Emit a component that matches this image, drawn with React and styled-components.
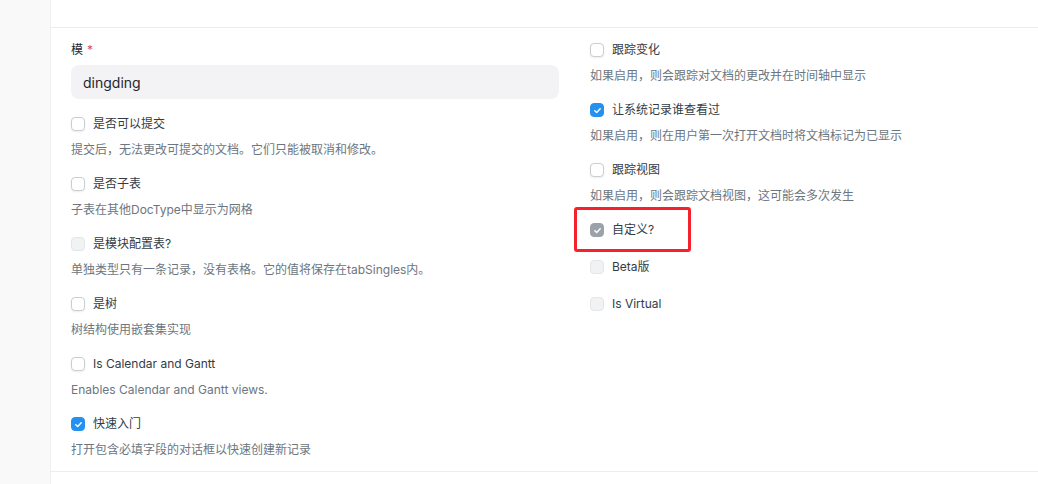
import React from 'react';
import styled, { createGlobalStyle, css } from 'styled-components';

const GlobalStyle = createGlobalStyle`
  html, body {
    margin: 0;
    padding: 0;
    background: #ffffff;
    overflow: hidden;
  }
  body {
    font-family: Inter, "Noto Sans CJK SC", "Noto Sans", sans-serif;
    color: #1f272e;
  }
`;

const Page = styled.div`
  display: flex;
  width: 1038px;
  height: 484px;
`;

const Sidebar = styled.aside`
  width: 50px;
  flex: none;
  background: #f9f9f9;
  border-right: 1px solid #f0f0f0;
`;

const Main = styled.main`
  flex: 1;
  min-width: 0;
  display: flex;
  flex-direction: column;
`;

const TopStrip = styled.div`
  height: 27px;
  border-bottom: 1px solid #ededed;
`;

const Section = styled.section`
  display: grid;
  grid-template-columns: 488px 488px;
  column-gap: 31px;
  padding: 12px 0 12px 20px;
  border-bottom: 1px solid #ededed;
`;

const Column = styled.div`
  display: flex;
  flex-direction: column;
`;

const FieldLabel = styled.label`
  font-size: 12px;
  line-height: 20px;
  color: #1f272e;
  margin-bottom: 5px;
`;

const Required = styled.span`
  color: #e24c4c;
  margin-left: 4px;
`;

const TextInput = styled.div`
  height: 34px;
  box-sizing: border-box;
  padding: 0 12px;
  display: flex;
  align-items: center;
  background: #f3f3f5;
  border-radius: 8px;
  font-size: 14px;
  color: #1f272e;
  margin-bottom: 15px;
`;

const Item = styled.div`
  position: relative;
  display: flex;
  flex-direction: column;
  margin-bottom: ${p => (p.$last ? 0 : p.$plain ? 17 : 15)}px;
`;

const Row = styled.div`
  display: flex;
  align-items: center;
  gap: 8px;
  height: 20px;
`;

const boxVariants = {
  off: css`
    background: #ffffff;
    border: 1px solid #c9ced3;
    box-shadow: 0 1px 2px rgba(0, 0, 0, 0.08);
  `,
  on: css`
    background: #2490ef;
    border: 1px solid #2490ef;
  `,
  disabledOff: css`
    background: #f1f2f3;
    border: 1px solid #e3e6e8;
  `,
  disabledOn: css`
    background: #9ca2a9;
    border: 1px solid #9ca2a9;
  `,
};

const Box = styled.span`
  width: 14px;
  height: 14px;
  box-sizing: border-box;
  border-radius: 4px;
  display: inline-flex;
  align-items: center;
  justify-content: center;
  flex: none;
  ${p => boxVariants[p.$variant]}
`;

const RowLabel = styled.span`
  font-size: 12px;
  line-height: 20px;
  color: #333c44;
`;

const Help = styled.p`
  margin: 7px 0 0;
  font-size: 12px;
  line-height: 18px;
  color: #6c7680;
`;

const Highlight = styled.div`
  position: absolute;
  left: -16px;
  top: -13px;
  width: 117px;
  height: 45px;
  box-sizing: border-box;
  border: 3px solid #f5222d;
  border-radius: 3px;
  pointer-events: none;
`;

const Check = () => (
  <svg width="9" height="9" viewBox="0 0 10 10" fill="none">
    <path d="M2 5.2 L4.1 7.2 L8 3" stroke="#fff" strokeWidth="1.6" strokeLinecap="round" strokeLinejoin="round" />
  </svg>
);

function CheckField({ label, help, variant = 'off', last, highlight }) {
  const checked = variant === 'on' || variant === 'disabledOn';
  return (
    <Item $last={last} $plain={!help}>
      <Row>
        <Box $variant={variant}>{checked && <Check />}</Box>
        <RowLabel>{label}</RowLabel>
      </Row>
      {help && <Help>{help}</Help>}
      {highlight && <Highlight />}
    </Item>
  );
}

const leftFields = [
  { label: '是否可以提交', help: '提交后，无法更改可提交的文档。它们只能被取消和修改。' },
  { label: '是否子表', help: '子表在其他DocType中显示为网格' },
  { label: '是模块配置表?', help: '单独类型只有一条记录，没有表格。它的值将保存在tabSingles内。', variant: 'disabledOff' },
  { label: '是树', help: '树结构使用嵌套集实现' },
  { label: 'Is Calendar and Gantt', help: 'Enables Calendar and Gantt views.' },
  { label: '快速入门', help: '打开包含必填字段的对话框以快速创建新记录', variant: 'on' },
];

const rightFields = [
  { label: '跟踪变化', help: '如果启用，则会跟踪对文档的更改并在时间轴中显示' },
  { label: '让系统记录谁查看过', help: '如果启用，则在用户第一次打开文档时将文档标记为已显示', variant: 'on' },
  { label: '跟踪视图', help: '如果启用，则会跟踪文档视图，这可能会多次发生' },
  { label: '自定义?', variant: 'disabledOn', highlight: true },
  { label: 'Beta版', variant: 'disabledOff' },
  { label: 'Is Virtual', variant: 'disabledOff' },
];

export default function App() {
  return (
    <Page>
      <GlobalStyle />
      <Sidebar />
      <Main>
        <TopStrip />
        <Section>
          <Column>
            <FieldLabel>
              模<Required>*</Required>
            </FieldLabel>
            <TextInput>dingding</TextInput>
            {leftFields.map((f, i) => (
              <CheckField key={f.label} {...f} last={i === leftFields.length - 1} />
            ))}
          </Column>
          <Column>
            {rightFields.map(f => (
              <CheckField key={f.label} {...f} />
            ))}
          </Column>
        </Section>
      </Main>
    </Page>
  );
}
